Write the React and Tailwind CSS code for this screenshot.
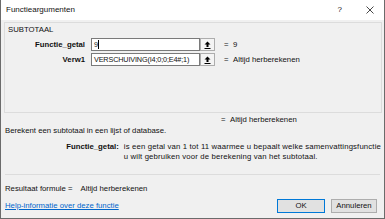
import React from "react";

const ArrowBtn = () => (
  <div className="w-[15px] h-full border border-[#adadad] bg-[#f4f4f4] flex items-center justify-center">
    <svg width="7" height="8" viewBox="0 0 7 8">
      <path d="M3.5 0.5 L6.5 3.5 H4.5 V6 H2.5 V3.5 H0.5 Z" fill="#000" />
      <rect x="0.5" y="7" width="6" height="1" fill="#000" />
    </svg>
  </div>
);

const ArgRij = ({ label, waarde, resultaat, cursor }) => (
  <div className="flex items-center h-[13px]">
    <div className="w-[80px] text-right font-bold">{label}</div>
    <div className="ml-[6px] w-[109px] h-full border border-[#7a7a7a] bg-white flex items-center pl-[2px] overflow-hidden whitespace-nowrap">
      <span className="text-[7.25px] tracking-[-0.15px]">{waarde}</span>
      {cursor && <span className="w-px h-[9px] bg-black" />}
    </div>
    <ArrowBtn />
    <span className="ml-[9px] w-[9px]">=</span>
    <span>{resultaat}</span>
  </div>
);

export default function App() {
  return (
    <div
      className="w-[385px] h-[219px] flex flex-col border-x border-b border-[#6b6b6b] text-[7.75px] leading-[10px] text-[#111]"
      style={{ fontFamily: '"Liberation Sans", Arial, sans-serif' }}
    >
      {/* titelbalk */}
      <div className="h-[20px] shrink-0 bg-white flex items-center pl-[5px]">
        <span className="text-[8px]">Functieargumenten</span>
        <span className="ml-auto text-[8px] mr-[24px]">?</span>
        <svg width="8" height="8" viewBox="0 0 8 8" className="mr-[10px]">
          <path d="M0.5 0.5 L7.5 7.5 M7.5 0.5 L0.5 7.5" stroke="#333" strokeWidth="0.9" />
        </svg>
      </div>

      <div className="flex-1 bg-[#f0f0f0] px-[3px] flex flex-col">
        {/* groep */}
        <div className="mt-[2px] w-[378px] h-[91px] border border-[#dcdcdc] shrink-0">
          <div className="pl-[3px] pt-[2px]">SUBTOTAAL</div>
          <div className="mt-[3px] flex flex-col gap-[2px]">
            <ArgRij label="Functie_getal" waarde="9" resultaat="9" cursor />
            <ArgRij
              label="Verw1"
              waarde="VERSCHUIVING(I4;0;0;E4#;1)"
              resultaat="Altijd herberekenen"
            />
          </div>
        </div>

        <div className="mt-[2px] pl-[217px] flex">
          <span className="w-[9px]">=</span>
          <span>Altijd herberekenen</span>
        </div>
        <div className="mt-[1px] pl-[1px]">Berekent een subtotaal in een lijst of database.</div>

        <div className="mt-[6px] flex whitespace-nowrap">
          <div className="w-[129px] text-right font-bold">Functie_getal:</div>
          <div className="ml-[5px] tracking-[0.15px]">
            <div>is een getal van 1 tot 11 waarmee u bepaalt welke samenvattingsfunctie</div>
            <div>u wilt gebruiken voor de berekening van het subtotaal.</div>
          </div>
        </div>

        <div className="mt-[12px] h-px bg-[#dcdcdc] mx-[1px]" />

        <div className="mt-[9px] pl-[1px]">
          Resultaat formule =&nbsp;&nbsp;&nbsp; Altijd herberekenen
        </div>

        <div className="mt-[5px] flex items-center pl-[1px] pr-[4px]">
          <a className="text-[#0066cc] underline cursor-pointer">Help-informatie over deze functie</a>
          <button className="ml-auto w-[48px] h-[14px] border border-[#0078d7] bg-[#e1e1e1] leading-none">
            OK
          </button>
          <button className="ml-[6px] w-[46px] h-[14px] border border-[#adadad] bg-[#e1e1e1] leading-none">
            Annuleren
          </button>
        </div>
      </div>
    </div>
  );
}
